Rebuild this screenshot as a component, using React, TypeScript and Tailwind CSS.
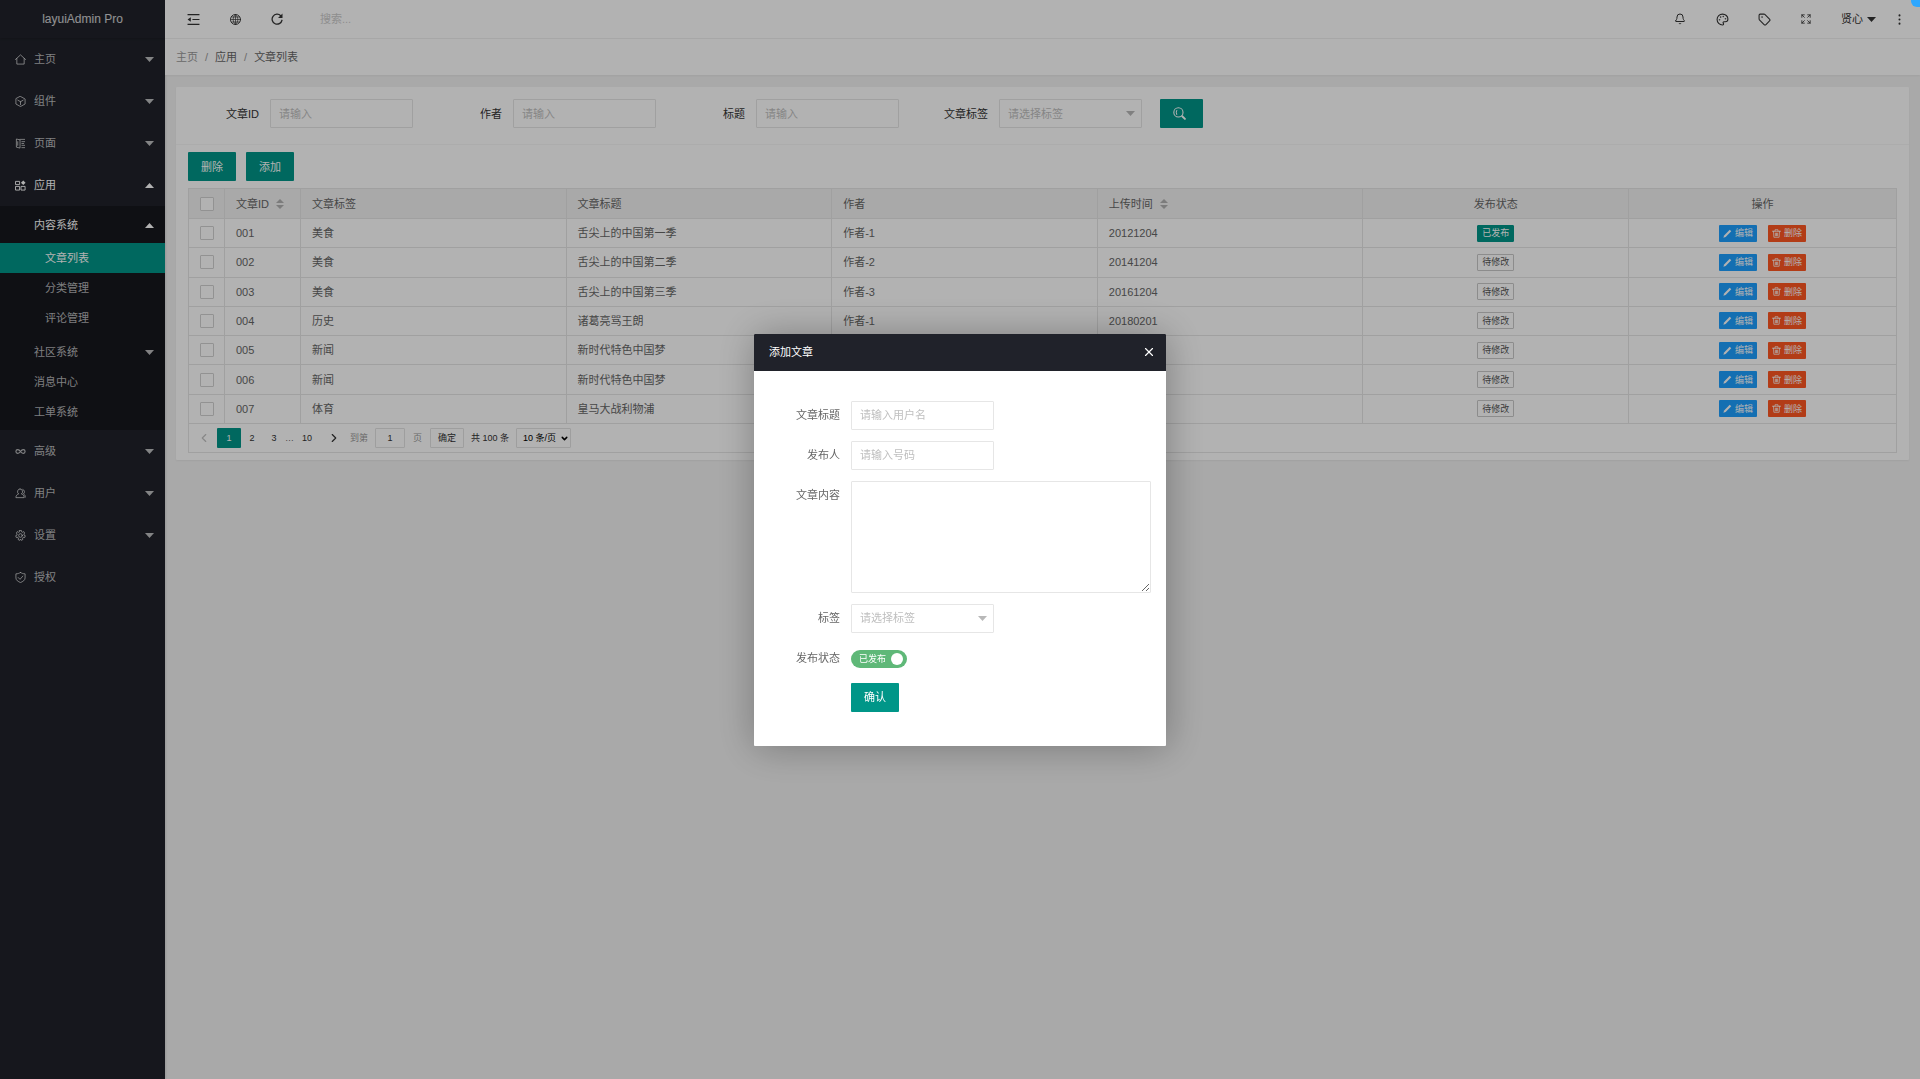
import { useState } from 'react';
import type { ReactNode } from 'react';
import { Bell, ChevronDown, ChevronLeft, ChevronRight, Palette, Tag, X } from 'lucide-react';

interface Article {
  id: string;
  label: string;
  title: string;
  author: string;
  time: string;
  published: boolean;
}

const articles: Article[] = [
  { id: '001', label: '美食', title: '舌尖上的中国第一季', author: '作者-1', time: '20121204', published: true },
  { id: '002', label: '美食', title: '舌尖上的中国第二季', author: '作者-2', time: '20141204', published: false },
  { id: '003', label: '美食', title: '舌尖上的中国第三季', author: '作者-3', time: '20161204', published: false },
  { id: '004', label: '历史', title: '诸葛亮骂王朗', author: '作者-1', time: '20180201', published: false },
  { id: '005', label: '新闻', title: '新时代特色中国梦', author: '作者-1', time: '20180201', published: false },
  { id: '006', label: '新闻', title: '新时代特色中国梦', author: '作者-1', time: '20180201', published: false },
  { id: '007', label: '体育', title: '皇马大战利物浦', author: '作者-1', time: '20180201', published: false },
];

const fieldClass =
  'h-[29px] w-[143px] rounded-[1px] border border-[#e6e6e6] bg-white pl-2 text-[11px] leading-4 outline-none placeholder:text-[#bfbfbf]';
const buttonClass = 'flex h-[29px] items-center justify-center rounded-[1px] bg-[#009688] text-[11px] leading-4 text-white';

function Svg({ className = 'size-[11px]', children }: { className?: string; children: ReactNode }) {
  return (
    <svg viewBox="0 0 24 24" className={className} fill="none" stroke="currentColor" strokeWidth="2" strokeLinejoin="round" strokeLinecap="round">
      {children}
    </svg>
  );
}

const HomeIcon = () => (
  <Svg>
    <path d="M1 12 12 2l11 10M4 10v12h16V10" />
  </Svg>
);

const CubeIcon = () => (
  <Svg>
    <path d="M12 1 22 6.500v11L12 23 2 17.500v-11zM6 9l6 3.500L18 9M12 12.500V19" />
  </Svg>
);

const PageIcon = () => (
  <Svg>
    <path d="M3 3v17l8 2V5zM6 8v8M11 3h10M15 8h6M15 12h4M15 16h6M15 21h6" />
  </Svg>
);

const AppIcon = () => (
  <Svg>
    <path d="M2 3h8v7H2zM2 14h8v8H2zM14 14h8v8h-8z" />
    <path d="m18 1 5 5-5 5-5-5z" fill="currentColor" stroke="none" />
  </Svg>
);

const SeniorIcon = () => (
  <Svg>
    <path d="M12 12c-2-3-4-4-6-4a4 4 0 0 0 0 8c2 0 4-1 6-4s4-4 6-4a4 4 0 0 1 0 8c-2 0-4-1-6-4z" strokeWidth="2.500" />
  </Svg>
);

const UsersIcon = () => (
  <Svg>
    <path d="M11 2a5.500 6 0 0 0-3 11c-4 1.500-6 4-6 8h18c0-4-2-6.500-6-8a5.500 6 0 0 0-3-11M17 3c4 1 5 7 1.500 10 3 1.500 4 4 4 7" />
  </Svg>
);

const GearIcon = () => (
  <Svg>
    <path d="M10 1h4l.5 3 2 1L19 3.500l2 3L19.500 9v2l3 1.500-1.500 4-3-.5-1.500 1.500L17 21l-3.500 1.500L12 20l-1.500 2.500L7 21l.5-3.500L6 16l-3 .5-1.500-4 3-1.500V9L3 6.500l2-3L7.500 5l2-1z" />
    <circle cx="12" cy="12" r="4" />
  </Svg>
);

const AuthIcon = () => (
  <Svg>
    <path d="M12 1c3 2 6 3 10 3v9c0 5-5 8-10 10-5-2-10-5-10-10V4c4 0 7-1 10-3zM7 12l4 4 6-7" />
  </Svg>
);

const FoldIcon = () => (
  <Svg className="size-[13px]">
    <path d="M1 3h22M10 12h13M1 21h22" strokeLinecap="butt" />
    <path d="M7 8v8l-6-4z" fill="currentColor" stroke="none" />
  </Svg>
);

const GlobeIcon = () => (
  <Svg>
    <circle cx="12" cy="12" r="11" />
    <path d="M12 1v22M1 12h22M3 6.500h18M3 17.500h18M12 1c-7 6-7 16 0 22M12 1c7 6 7 16 0 22" strokeWidth="1.500" />
  </Svg>
);

const RefreshIcon = () => (
  <Svg className="size-3">
    <path d="M22 14.500A10 10 0 1 1 19.500 5.500" strokeWidth="2.500" />
    <path d="M23 1v9h-9z" fill="currentColor" stroke="none" />
  </Svg>
);

const FullIcon = () => (
  <Svg className="size-[10px]">
    <path d="M2 8V2h6M2 2l6 6M16 2h6v6M22 2l-6 6M2 16v6h6M2 22l6-6M22 16v6h-6M22 22l-6-6" />
  </Svg>
);

const MoreIcon = () => (
  <svg viewBox="0 0 24 24" className="size-[11px]" fill="currentColor">
    <circle cx="12" cy="3" r="2.200" />
    <circle cx="12" cy="12" r="2.200" />
    <circle cx="12" cy="21" r="2.200" />
  </svg>
);

const SearchIcon = () => (
  <Svg className="size-[13px]">
    <circle cx="10" cy="10" r="8.500" />
    <path d="M7 6.500c-1.500 2-1.500 5 0 7" />
    <path d="m17 17 5 5" strokeWidth="3.500" />
  </Svg>
);

const PencilIcon = () => (
  <svg viewBox="0 0 24 24" className="size-[9px]" fill="currentColor">
    <path d="M1 23 3 17 18 2l4 4L7 21z" />
  </svg>
);

const TrashIcon = () => (
  <Svg className="size-[9px]">
    <path d="M1 6h22M8 6V2h8v4M4 6l1 16h14l1-16M9 11v7M12 11v7M15 11v7" />
  </Svg>
);

function Caret({ up = false, className = '' }: { up?: boolean; className?: string }) {
  return (
    <svg viewBox="0 0 9 5" className={`h-[5px] w-[9px] ${className}`} fill="currentColor">
      <path d={up ? 'M0 5l4.500-5L9 5z' : 'M0 0h9L4.500 5z'} />
    </svg>
  );
}

function SortIcon() {
  return (
    <svg viewBox="0 0 8 10" className="h-[10px] w-2 text-[#b2b2b2]" fill="currentColor">
      <path d="M0 4 4 0l4 4zM0 6h8l-4 4z" />
    </svg>
  );
}

interface NavItemProps {
  icon: ReactNode;
  text: string;
  arrow?: 'up' | 'down';
}

function NavItem({ icon, text, arrow }: NavItemProps) {
  return (
    <a href="#" className={`flex h-[42px] items-center gap-2 pr-[11px] pl-[15px] ${arrow === 'up' ? 'text-white' : 'text-white/70'}`}>
      {icon}
      <span>{text}</span>
      {arrow && <Caret up={arrow === 'up'} className="ml-auto" />}
    </a>
  );
}

function SubItem({ text, arrow, active = false, nested = false }: { text: string; arrow?: 'up' | 'down'; active?: boolean; nested?: boolean }) {
  return (
    <a
      href="#"
      className={`flex h-[30px] items-center pr-[11px] ${nested ? 'pl-[45px]' : 'pl-[34px]'} ${active ? 'bg-[#009688]' : ''} ${
        active || arrow === 'up' ? 'text-white' : 'text-white/70'
      }`}
    >
      {text}
      {arrow && <Caret up={arrow === 'up'} className="ml-auto" />}
    </a>
  );
}

function Sidebar() {
  return (
    <aside className="w-[165px] shrink-0 bg-[#20222a] shadow-[1px_0_2px_rgba(0,0,0,0.1)]">
      <div className="flex h-[38px] items-center justify-center text-xs text-white/80 shadow-[0_1px_2px_rgba(0,0,0,0.15)]">layuiAdmin Pro</div>
      <nav>
        <NavItem icon={<HomeIcon />} text="主页" arrow="down" />
        <NavItem icon={<CubeIcon />} text="组件" arrow="down" />
        <NavItem icon={<PageIcon />} text="页面" arrow="down" />
        <NavItem icon={<AppIcon />} text="应用" arrow="up" />
        <div className="bg-black/30 pt-1 pb-[3px]">
          <SubItem text="内容系统" arrow="up" />
          <div className="pt-[3px] pb-1">
            <SubItem text="文章列表" active nested />
            <SubItem text="分类管理" nested />
            <SubItem text="评论管理" nested />
          </div>
          <SubItem text="社区系统" arrow="down" />
          <SubItem text="消息中心" />
          <SubItem text="工单系统" />
        </div>
        <NavItem icon={<SeniorIcon />} text="高级" arrow="down" />
        <NavItem icon={<UsersIcon />} text="用户" arrow="down" />
        <NavItem icon={<GearIcon />} text="设置" arrow="down" />
        <NavItem icon={<AuthIcon />} text="授权" />
      </nav>
    </aside>
  );
}

function HeaderButton({ label, children }: { label: string; children: ReactNode }) {
  return (
    <button aria-label={label} className="flex h-full w-[42px] items-center justify-center">
      {children}
    </button>
  );
}

function Header() {
  return (
    <header className="flex h-[39px] items-center border-b border-[#f0f0f0] bg-white pl-[7px] text-[#333]">
      <HeaderButton label="侧边伸缩">
        <FoldIcon />
      </HeaderButton>
      <HeaderButton label="前台">
        <GlobeIcon />
      </HeaderButton>
      <HeaderButton label="刷新">
        <RefreshIcon />
      </HeaderButton>
      <input aria-label="搜索" placeholder="搜索..." className="ml-[22px] w-[143px] outline-none placeholder:text-[#ccc]" />
      <div className="ml-auto flex h-full items-center">
        <HeaderButton label="消息">
          <Bell className="size-3" />
        </HeaderButton>
        <HeaderButton label="主题">
          <Palette className="size-[13px]" />
        </HeaderButton>
        <HeaderButton label="便签">
          <Tag className="size-[13px]" />
        </HeaderButton>
        <HeaderButton label="全屏">
          <FullIcon />
        </HeaderButton>
        <button className="flex h-full w-[51px] items-center gap-1 pl-[14px]">
          贤心
          <Caret />
        </button>
        <HeaderButton label="更多">
          <MoreIcon />
        </HeaderButton>
      </div>
    </header>
  );
}

function Breadcrumb() {
  return (
    <div className="flex h-9 items-center gap-[7px] bg-white px-[11px] text-[#666] shadow-[0_1px_2px_rgba(0,0,0,0.05)]">
      <a href="#" className="text-[#999]">
        主页
      </a>
      <span className="text-[#999]">/</span>
      <span>应用</span>
      <span className="text-[#999]">/</span>
      <span>文章列表</span>
    </div>
  );
}

function TagSelect({ id }: { id: string }) {
  return (
    <div className="relative">
      <select id={id} className={`${fieldClass} appearance-none text-[#bfbfbf]`}>
        <option>请选择标签</option>
      </select>
      <Caret className="pointer-events-none absolute top-3 right-[7px] text-[#b8b8b8]" />
    </div>
  );
}

function SearchField({ id, label, children }: { id: string; label: string; children: ReactNode }) {
  return (
    <div className="mr-[18px] flex items-center">
      <label htmlFor={id} className="w-[82px] pr-[11px] text-right">
        {label}
      </label>
      {children}
    </div>
  );
}

function SearchBar() {
  return (
    <form className="flex flex-wrap border-b border-[#f6f6f6] px-3 pt-3 pb-4 text-[#333]">
      <SearchField id="s-id" label="文章ID">
        <input id="s-id" placeholder="请输入" className={fieldClass} />
      </SearchField>
      <SearchField id="s-author" label="作者">
        <input id="s-author" placeholder="请输入" className={fieldClass} />
      </SearchField>
      <SearchField id="s-title" label="标题">
        <input id="s-title" placeholder="请输入" className={fieldClass} />
      </SearchField>
      <SearchField id="s-label" label="文章标签">
        <TagSelect id="s-label" />
      </SearchField>
      <button type="button" aria-label="搜索" className={`${buttonClass} w-[43px] pr-1`}>
        <SearchIcon />
      </button>
    </form>
  );
}

function CheckCell({ label }: { label: string }) {
  return (
    <input
      type="checkbox"
      aria-label={label}
      className="mx-auto block size-[14px] appearance-none rounded-[1px] border border-[#d2d2d2] bg-white checked:bg-[#5fb878]"
    />
  );
}

function ArticleTable() {
  const th = 'border-r border-b border-[#e6e6e6] px-[11px] font-normal';
  const td = 'border-r border-b border-[#e6e6e6] px-[11px]';
  return (
    <table className="h-[235px] w-full table-fixed border-separate border-spacing-0 text-[#666]">
      <thead>
        <tr className="h-[30px] bg-[#f2f2f2] text-left">
          <th className="w-9 border-r border-b border-[#e6e6e6]">
            <CheckCell label="全选" />
          </th>
          <th className={`${th} w-[76px]`}>
            <span className="flex items-center gap-[7px]">
              文章ID
              <SortIcon />
            </span>
          </th>
          <th className={th}>文章标签</th>
          <th className={th}>文章标题</th>
          <th className={th}>作者</th>
          <th className={th}>
            <span className="flex items-center gap-[7px]">
              上传时间
              <SortIcon />
            </span>
          </th>
          <th className={`${th} text-center`}>发布状态</th>
          <th className="w-[267px] border-b border-[#e6e6e6] text-center font-normal">操作</th>
        </tr>
      </thead>
      <tbody>
        {articles.map((a) => (
          <tr key={a.id}>
            <td className="border-r border-b border-[#e6e6e6]">
              <CheckCell label={a.id} />
            </td>
            <td className={td}>{a.id}</td>
            <td className={td}>{a.label}</td>
            <td className={td}>{a.title}</td>
            <td className={td}>{a.author}</td>
            <td className={td}>{a.time}</td>
            <td className={td}>
              <button
                className={`mx-auto flex h-[17px] items-center rounded-[1px] border px-1 text-[9px] leading-3 ${
                  a.published ? 'border-[#009688] bg-[#009688] text-white' : 'border-[#c9c9c9] bg-white text-[#555]'
                }`}
              >
                {a.published ? '已发布' : '待修改'}
              </button>
            </td>
            <td className="border-b border-[#e6e6e6]">
              <div className="flex justify-center gap-[11px] text-[9px] leading-3 text-white">
                <button className="flex h-[17px] w-[38px] items-center justify-center gap-[3px] rounded-[1px] bg-[#1e9fff]">
                  <PencilIcon />
                  编辑
                </button>
                <button className="flex h-[17px] w-[38px] items-center justify-center gap-[3px] rounded-[1px] bg-[#ff5722]">
                  <TrashIcon />
                  删除
                </button>
              </div>
            </td>
          </tr>
        ))}
      </tbody>
    </table>
  );
}

function Pagination() {
  const page = 'flex h-5 w-[22px] items-center justify-center';
  return (
    <div className="flex h-7 items-center pl-[2px] text-[9px] leading-3 text-[#333]">
      <button aria-label="上一页" className="flex h-5 w-[26px] items-center justify-center text-[#c2c2c2]">
        <ChevronLeft className="size-[14px]" />
      </button>
      <button className="flex h-5 w-6 items-center justify-center rounded-[1px] bg-[#009688] text-white">1</button>
      <button className={page}>2</button>
      <button className={page}>3</button>
      <span className="w-2 text-center text-[#666]">…</span>
      <button className="flex h-5 w-7 items-center justify-center">10</button>
      <button aria-label="下一页" className="flex h-5 w-[26px] items-center justify-center">
        <ChevronRight className="size-[14px]" />
      </button>
      <label htmlFor="page" className="mr-[7px] ml-[3px] text-[#999]">
        到第
      </label>
      <input id="page" defaultValue="1" className="h-5 w-[30px] rounded-[1px] border border-[#e2e2e2] bg-white text-center outline-none" />
      <span className="mx-2 text-[#999]">页</span>
      <button className="h-5 w-[34px] rounded-[1px] border border-[#e2e2e2] bg-white">确定</button>
      <span className="mx-[7px]">共 100 条</span>
      <div className="relative">
        <select aria-label="每页条数" className="block h-5 w-[55px] appearance-none rounded-[1px] border border-[#e2e2e2] bg-white pl-[6px] text-black">
          <option>10 条/页</option>
        </select>
        <ChevronDown className="pointer-events-none absolute top-[6px] right-[2px] size-[9px] text-black" strokeWidth={4} />
      </div>
    </div>
  );
}

function FormRow({ id, label, children }: { id: string; label: string; children: ReactNode }) {
  return (
    <div className="flex items-start">
      <label htmlFor={id} className="w-[97px] py-[6px] pr-[11px] text-right text-[#666]">
        {label}
      </label>
      {children}
    </div>
  );
}

function AddDialog({ onClose }: { onClose: () => void }) {
  const [published, setPublished] = useState(true);

  return (
    <div className="fixed inset-0 z-10 flex items-center justify-center bg-black/30">
      <div role="dialog" aria-label="添加文章" className="w-[412px] rounded-[1px] bg-white pb-[34px] shadow-[1px_1px_38px_rgba(0,0,0,0.3)]">
        <div className="flex h-[37px] items-center justify-between rounded-t-[1px] bg-[#20222a] pr-[10px] pl-[15px] text-white">
          <h2>添加文章</h2>
          <button aria-label="关闭" onClick={onClose}>
            <X className="size-[14px]" />
          </button>
        </div>
        <form className="flex flex-col gap-[11px] pt-[30px] pr-[15px]">
          <FormRow id="f-title" label="文章标题">
            <input id="f-title" placeholder="请输入用户名" className={fieldClass} />
          </FormRow>
          <FormRow id="f-user" label="发布人">
            <input id="f-user" placeholder="请输入号码" className={fieldClass} />
          </FormRow>
          <FormRow id="f-content" label="文章内容">
            <textarea id="f-content" className="h-28 min-w-0 flex-1 resize rounded-[1px] border border-[#e6e6e6] bg-white outline-none" />
          </FormRow>
          <FormRow id="f-label" label="标签">
            <TagSelect id="f-label" />
          </FormRow>
          <FormRow id="f-status" label="发布状态">
            <label className="mt-[6px] flex h-[18px] w-14 cursor-pointer items-center justify-between rounded-full bg-[#5fb878] pr-1 pl-2 text-[9px] leading-3 text-white">
              <input id="f-status" type="checkbox" className="sr-only" checked={published} onChange={(e) => setPublished(e.target.checked)} />
              {published ? '已发布' : '待修改'}
              <span className="size-3 rounded-full bg-white" />
            </label>
          </FormRow>
          <button type="button" className={`${buttonClass} ml-[97px] w-12`}>
            确认
          </button>
        </form>
      </div>
    </div>
  );
}

export default function App() {
  const [open, setOpen] = useState(true);

  return (
    <div className="flex min-h-screen bg-[#f2f2f2] font-['Liberation_Sans','Noto_Sans_CJK_SC',sans-serif] text-[11px] leading-4">
      <Sidebar />
      <div className="min-w-0 flex-1">
        <Header />
        <Breadcrumb />
        <main className="px-[11px] pt-3">
          <section className="rounded-[1px] bg-white pb-[7px] shadow-[0_1px_2px_rgba(0,0,0,0.05)]">
            <SearchBar />
            <div className="px-3 pt-[7px]">
              <div className="mb-[7px] flex gap-[10px]">
                <button className={`${buttonClass} w-12`}>删除</button>
                <button className={`${buttonClass} w-12`} onClick={() => setOpen(true)}>
                  添加
                </button>
              </div>
              <div className="border border-[#e6e6e6]">
                <ArticleTable />
                <Pagination />
              </div>
            </div>
          </section>
        </main>
      </div>

      {open && <AddDialog onClose={() => setOpen(false)} />}

      {/* Floating badge in the window corner */}
      <div className="fixed top-0 right-0 z-20 h-[7px] w-[9px] rounded-bl-md bg-[#2ea7ff]" />
    </div>
  );
}
